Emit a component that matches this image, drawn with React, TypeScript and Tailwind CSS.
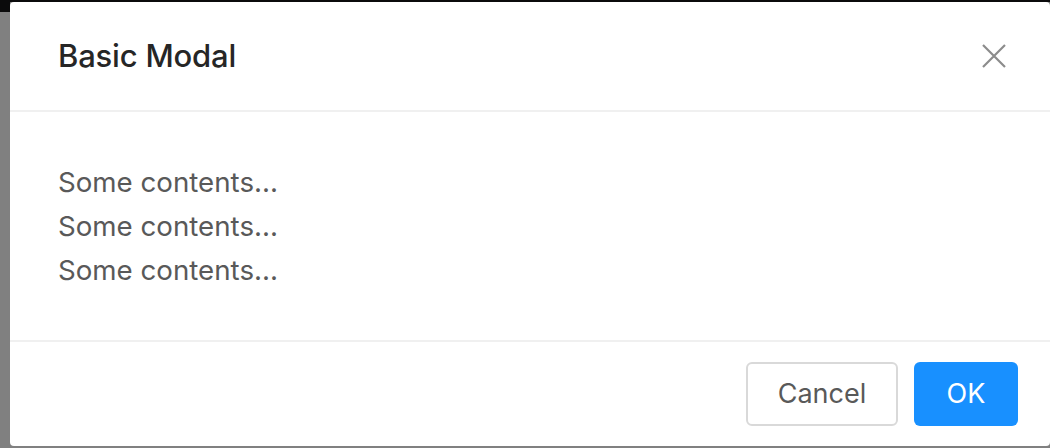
import React from "react";

export default function App() {
  return (
    <div
      className="w-[1050px] h-[448px] overflow-hidden flex flex-col bg-[#808080]"
      style={{ fontFamily: "Inter, 'Liberation Sans', sans-serif" }}
    >
      <div className="h-[2px] shrink-0 bg-[#0b0b0c]" />
      <div className="flex flex-1">
        <div className="w-[10px] shrink-0 flex flex-col">
          <div className="h-[10px] bg-[#0b0b0c]" />
          <div className="flex-1 bg-[#808080]" />
        </div>
        <div className="w-[1040px] h-[444px] bg-white rounded-[4px] flex flex-col">
          <div className="h-[108px] flex items-center justify-between pl-[48px] border-b-2 border-[#f0f0f0] box-content">
            <div className="text-[31px] font-medium text-[#262626] leading-[44px] tracking-[-0.2px]">
              Basic Modal
            </div>
            <div className="w-[112px] h-[108px] flex items-center justify-center">
              <svg width="24" height="24" viewBox="0 0 24 24" fill="none">
                <path d="M1 1 L23 23 M23 1 L1 23" stroke="#8c8c8c" strokeWidth="2.2" />
              </svg>
            </div>
          </div>
          <div className="h-[228px] p-[48px] text-[27.7px] leading-[44px] text-[#595959]">
            <div>Some contents...</div>
            <div>Some contents...</div>
            <div>Some contents...</div>
          </div>
          <div className="flex-1 border-t-2 border-[#f0f0f0] flex items-center justify-end gap-[16px] pr-[32px]">
            <button className="h-[64px] w-[152px] rounded-[6px] border-2 border-[#d9d9d9] bg-white text-[27px] text-[#595959]">
              Cancel
            </button>
            <button className="h-[64px] w-[104px] rounded-[6px] bg-[#1890ff] text-[27px] text-white">
              OK
            </button>
          </div>
        </div>
      </div>
    </div>
  );
}
